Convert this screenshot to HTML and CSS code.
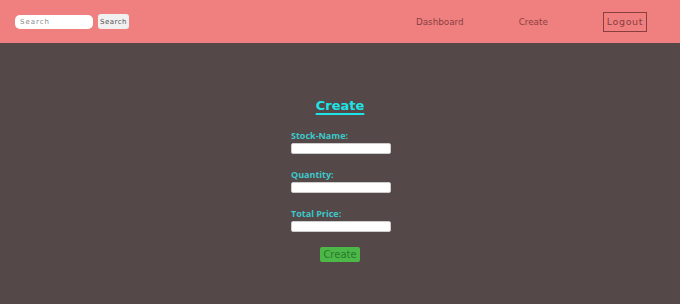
FILE: index.html
```html
<!DOCTYPE html>
<html>
<head>
<meta charset="utf-8">
<link rel="stylesheet" href="styles.css">
</head>
<body>
<header class="topbar">
  <div class="search">
    <input class="search-input" type="text" placeholder="Search">
    <button class="search-btn">Search</button>
  </div>
  <nav class="nav">
    <a class="nav-link" href="#">Dashboard</a>
    <a class="nav-link" href="#">Create</a>
    <a class="nav-link logout" href="#">Logout</a>
  </nav>
</header>
<main class="main">
  <form class="form">
    <h1 class="title">Create</h1>
    <label class="label">Stock-Name:</label>
    <input class="field" type="text">
    <label class="label">Quantity:</label>
    <input class="field" type="text">
    <label class="label">Total Price:</label>
    <input class="field" type="text">
    <button class="submit" type="button">Create</button>
  </form>
</main>
</body>
</html>
```
FILE: styles.css
```css
* { box-sizing: border-box; }
html, body { margin: 0; padding: 0; }
body {
  background: #544848;
  font-family: "DejaVu Sans", sans-serif;
  width: 680px;
  height: 304px;
  overflow: hidden;
}
.topbar {
  height: 43px;
  background: #f08080;
  display: flex;
  align-items: center;
  justify-content: space-between;
  padding: 0 33px 0 15px;
}
.search { display: flex; align-items: center; gap: 5px; }
.search-input {
  width: 78px;
  height: 14px;
  border: none;
  border-radius: 5px;
  background: #fff;
  font-family: inherit;
  font-size: 7px;
  letter-spacing: 1px;
  padding: 0 5px;
  outline: none;
}
.search-input::placeholder { color: #8c8c8c; }
.search-btn {
  width: 31px;
  height: 15px;
  border: none;
  border-radius: 3px;
  background: #f0f0f0;
  color: #555;
  font-family: inherit;
  font-size: 7px;
  letter-spacing: 0.5px;
  padding: 0;
}
.nav { display: flex; align-items: center; }
.nav-link {
  color: #8a3e3e;
  text-decoration: none;
  font-size: 8.8px;
}
.nav-link:nth-child(2) { margin-left: 55px; }
.nav-link:nth-child(3) { margin-left: 55px; }
.logout {
  border: 1px solid #8a3e3e;
  padding: 4px 3px;
  letter-spacing: 0.6px;
  line-height: 10px;
  font-size: 9.5px;
}
.main { display: flex; justify-content: center; }
.form {
  width: 100px;
  display: flex;
  flex-direction: column;
  align-items: flex-start;
  margin-left: 2px;
}
.title {
  align-self: center;
  margin: 54px 0 15px -2px;
  color: #1ee5e5;
  font-size: 13px;
  font-weight: bold;
  text-decoration: underline;
  text-decoration-thickness: 2px;
  text-underline-offset: 3px;
  line-height: 18px;
}
.label {
  color: #3cc8cc;
  font-family: "Open Sans", sans-serif;
  font-size: 9px;
  font-weight: 700;
  line-height: 12px;
  margin-bottom: 1px;
}
.field {
  width: 100px;
  height: 11px;
  border: 1px solid #ccc;
  border-radius: 2px;
  background: #fff;
  margin-bottom: 15px;
}
.submit {
  align-self: center;
  margin-top: 0;
  margin-left: -2px;
  width: 40px;
  height: 15px;
  border: none;
  border-radius: 2px;
  background: #4cb848;
  color: #2a7a2a;
  font-family: inherit;
  font-size: 10px;
  padding: 0;
}
```
